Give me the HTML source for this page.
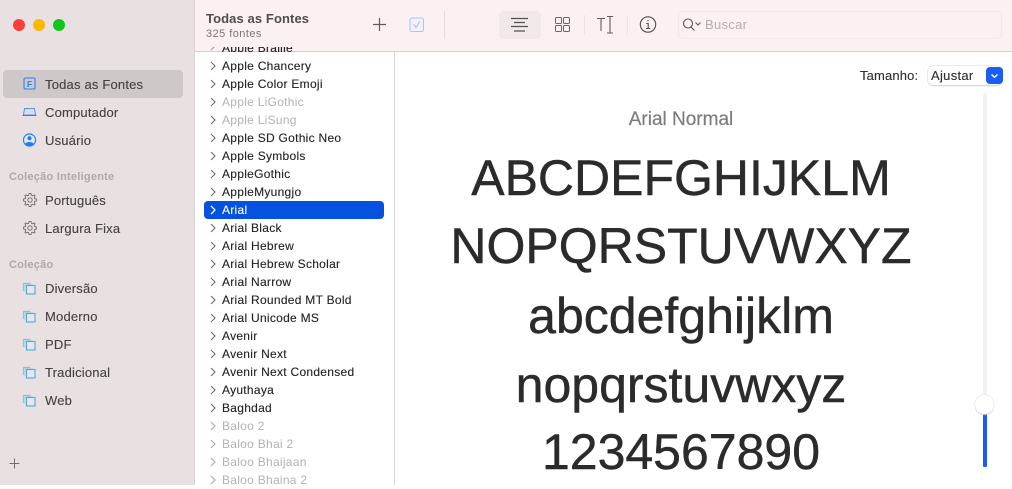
<!DOCTYPE html>
<html><head><meta charset="utf-8"><style>
html,body{margin:0;padding:0}
body{width:1012px;height:485px;overflow:hidden;position:relative;background:#fff;font-family:"Liberation Sans",sans-serif;-webkit-font-smoothing:antialiased}
div,span,svg{position:absolute}
.t{white-space:nowrap;line-height:18px}
.s{left:45px;font-size:13px;color:#454142;letter-spacing:.19px;-webkit-text-stroke:.12px #454142}
.h{left:9px;font-size:11px;font-weight:bold;color:#b0a8aa;letter-spacing:.24px}
.f{left:222px;font-size:12px;color:#222;letter-spacing:.28px;-webkit-text-stroke:.12px #222}
.f.g{color:#b2b2b2;-webkit-text-stroke:0}
.big{left:395px;width:572px;text-align:center;font-size:50px;line-height:60px;color:#2b2b2b;white-space:nowrap;-webkit-text-stroke:.45px #2b2b2b}
</style></head><body>
<div style="left:0;top:0;width:194px;height:485px;background:#e8e0e1;border-right:1px solid #d8d2d3"></div>
<div style="left:13px;top:19px;width:12px;height:12px;border-radius:50%;background:#fb3d3c"></div>
<div style="left:33px;top:19px;width:12px;height:12px;border-radius:50%;background:#fdb800"></div>
<div style="left:53px;top:19px;width:12px;height:12px;border-radius:50%;background:#0fc71c"></div>
<div style="left:3px;top:70px;width:180px;height:28px;border-radius:4px;background:#cfc8c9"></div>

<svg style="left:22px;top:76px" width="16" height="16" viewBox="0 0 16 16"><rect x="2" y="2" width="11" height="11" rx="1.2" fill="none" stroke="#2f7fee" stroke-width="1.1"/><text x="5" y="11" font-size="8.5" font-weight="bold" fill="#2f7fee" font-family="Liberation Sans">F</text></svg>
<svg style="left:22px;top:105px" width="16" height="16" viewBox="0 0 16 16"><path d="M2.5 3.500h10l1 6.500h-12z" fill="#dbdfe8" stroke="#2f7fee" stroke-width=".8"/><path d="M0.500 10.500h14" stroke="#2f7fee" stroke-width="1"/></svg>
<svg style="left:22px;top:132px" width="16" height="16" viewBox="0 0 16 16"><circle cx="7.500" cy="8" r="6" fill="#e8e8f4" stroke="#1f7cf2" stroke-width="1.200"/><circle cx="7.500" cy="6.200" r="2.100" fill="#1f7cf2"/><path d="M3.200 12c1-2.600 7.600-2.600 8.600 0a6 6 0 0 1-8.600 0z" fill="#1f7cf2"/></svg>

<div class="t s" style="top:76px">Todas as Fontes</div>
<div class="t s" style="top:104px">Computador</div>
<div class="t s" style="top:132px">Usuário</div>
<div class="t h" style="top:168px">Coleção Inteligente</div>

<svg style="left:22px;top:192px" width="16" height="16" viewBox="0 0 16 16"><g fill="none" stroke="#6b6668" stroke-width=".85"><circle cx="8" cy="8" r="2.200"/><path d="M7 1.600H9L9.400 3.300 10.700 3.800 12.200 2.900 13.100 3.800 12.200 5.300 12.700 6.600 14.400 7V9L12.700 9.400 12.200 10.700 13.100 12.200 12.200 13.100 10.700 12.200 9.400 12.700 9 14.400H7L6.600 12.700 5.300 12.200 3.800 13.100 2.900 12.200 3.800 10.700 3.300 9.400 1.600 9V7L3.300 6.600 3.800 5.300 2.900 3.800 3.800 2.900 5.300 3.800 6.600 3.300Z"/></g></svg>
<svg style="left:22px;top:220px" width="16" height="16" viewBox="0 0 16 16"><g fill="none" stroke="#6b6668" stroke-width=".85"><circle cx="8" cy="8" r="2.200"/><path d="M7 1.600H9L9.400 3.300 10.700 3.800 12.200 2.900 13.100 3.800 12.200 5.300 12.700 6.600 14.400 7V9L12.700 9.400 12.200 10.700 13.100 12.200 12.200 13.100 10.700 12.200 9.400 12.700 9 14.400H7L6.600 12.700 5.300 12.200 3.800 13.100 2.900 12.200 3.800 10.700 3.300 9.400 1.600 9V7L3.300 6.600 3.800 5.300 2.900 3.800 3.800 2.900 5.300 3.800 6.600 3.300Z"/></g></svg>
<div class="t s" style="top:192px">Português</div>
<div class="t s" style="top:220px">Largura Fixa</div>
<div class="t h" style="top:256px">Coleção</div>

<svg style="left:22px;top:282px" width="16" height="14" viewBox="0 0 16 14"><path d="M1.500 9V1.500h7" fill="none" stroke="#8cc3df" stroke-width="1.200"/><path d="M3 10V2.800h7.500" fill="none" stroke="#a5cfe4" stroke-width="1"/><rect x="4.500" y="3.500" width="8.500" height="8.500" fill="#e8e6ea" stroke="#45aede" stroke-width="1.100"/></svg>
<svg style="left:22px;top:310px" width="16" height="14" viewBox="0 0 16 14"><path d="M1.500 9V1.500h7" fill="none" stroke="#8cc3df" stroke-width="1.200"/><path d="M3 10V2.800h7.500" fill="none" stroke="#a5cfe4" stroke-width="1"/><rect x="4.500" y="3.500" width="8.500" height="8.500" fill="#e8e6ea" stroke="#45aede" stroke-width="1.100"/></svg>
<svg style="left:22px;top:338px" width="16" height="14" viewBox="0 0 16 14"><path d="M1.500 9V1.500h7" fill="none" stroke="#8cc3df" stroke-width="1.200"/><path d="M3 10V2.800h7.500" fill="none" stroke="#a5cfe4" stroke-width="1"/><rect x="4.500" y="3.500" width="8.500" height="8.500" fill="#e8e6ea" stroke="#45aede" stroke-width="1.100"/></svg>
<svg style="left:22px;top:366px" width="16" height="14" viewBox="0 0 16 14"><path d="M1.500 9V1.500h7" fill="none" stroke="#8cc3df" stroke-width="1.200"/><path d="M3 10V2.800h7.500" fill="none" stroke="#a5cfe4" stroke-width="1"/><rect x="4.500" y="3.500" width="8.500" height="8.500" fill="#e8e6ea" stroke="#45aede" stroke-width="1.100"/></svg>
<svg style="left:22px;top:394px" width="16" height="14" viewBox="0 0 16 14"><path d="M1.500 9V1.500h7" fill="none" stroke="#8cc3df" stroke-width="1.200"/><path d="M3 10V2.800h7.500" fill="none" stroke="#a5cfe4" stroke-width="1"/><rect x="4.500" y="3.500" width="8.500" height="8.500" fill="#e8e6ea" stroke="#45aede" stroke-width="1.100"/></svg>
<div class="t s" style="top:280px">Diversão</div>
<div class="t s" style="top:308px">Moderno</div>
<div class="t s" style="top:336px">PDF</div>
<div class="t s" style="top:364px">Tradicional</div>
<div class="t s" style="top:392px">Web</div>
<svg style="left:9px;top:458px" width="11" height="11" viewBox="0 0 11 11"><path d="M5.500 .5v10M.5 5.500h10" stroke="#736e6f" stroke-width="1"/></svg>

<!-- list -->
<div style="left:204px;top:201px;width:180px;height:18px;border-radius:4px;background:#0551e0"></div>
<svg style="left:205px;top:48px" width="18" height="437" viewBox="0 0 18 437" fill="none" stroke="#6f6f6f" stroke-width="1.100">
<path d="M6 14l4 4-4 4M6 32l4 4-4 4"/>
<path d="M6 50l4 4-4 4M6 68l4 4-4 4M6 86l4 4-4 4M6 104l4 4-4 4M6 122l4 4-4 4M6 140l4 4-4 4"/>
<path d="M6 158l4 4-4 4" stroke="#fff" stroke-width="1.300"/>
<path d="M6 176l4 4-4 4M6 194l4 4-4 4M6 212l4 4-4 4M6 230l4 4-4 4M6 248l4 4-4 4M6 266l4 4-4 4M6 284l4 4-4 4M6 302l4 4-4 4M6 320l4 4-4 4M6 338l4 4-4 4M6 356l4 4-4 4"/>
<path d="M6 374l4 4-4 4M6 392l4 4-4 4M6 410l4 4-4 4M6 428l4 4-4 4" stroke="#a9a9a9"/>
</svg>
<div class="t f" style="top:57px">Apple Chancery</div>
<div class="t f" style="top:75px">Apple Color Emoji</div>
<div class="t f g" style="top:93px">Apple LiGothic</div>
<div class="t f g" style="top:111px">Apple LiSung</div>
<div class="t f" style="top:129px">Apple SD Gothic Neo</div>
<div class="t f" style="top:147px">Apple Symbols</div>
<div class="t f" style="top:165px">AppleGothic</div>
<div class="t f" style="top:183px">AppleMyungjo</div>
<div class="t f" style="top:201px;color:#fff;-webkit-text-stroke:.12px #fff">Arial</div>
<div class="t f" style="top:219px">Arial Black</div>
<div class="t f" style="top:237px">Arial Hebrew</div>
<div class="t f" style="top:255px">Arial Hebrew Scholar</div>
<div class="t f" style="top:273px">Arial Narrow</div>
<div class="t f" style="top:291px">Arial Rounded MT Bold</div>
<div class="t f" style="top:309px">Arial Unicode MS</div>
<div class="t f" style="top:327px">Avenir</div>
<div class="t f" style="top:345px">Avenir Next</div>
<div class="t f" style="top:363px">Avenir Next Condensed</div>
<div class="t f" style="top:381px">Ayuthaya</div>
<div class="t f" style="top:399px">Baghdad</div>
<div class="t f g" style="top:417px">Baloo 2</div>
<div class="t f g" style="top:435px">Baloo Bhai 2</div>
<div class="t f g" style="top:453px">Baloo Bhaijaan</div>
<div class="t f g" style="top:471px">Baloo Bhaina 2</div>
<div style="left:394px;top:52px;width:1px;height:433px;background:#d9d9d9"></div>

<!-- toolbar -->
<div style="left:195px;top:0;width:817px;height:51px;background:#fbf1f1;border-bottom:1px solid #d6d2d2"></div>
<div style="left:195px;top:47px;width:199px;height:5px;overflow:hidden">
<div class="t f" style="left:27px;top:-8px">Apple Braille</div>
<svg style="left:10px;top:-1px" width="18" height="6" viewBox="0 0 18 6" fill="none" stroke="#a09c9c" stroke-width="1.100"><path d="M6 -4l4 4-4 4"/></svg>
</div>
<div class="t" style="left:206px;top:10px;font-size:13px;font-weight:bold;color:#514c4d;letter-spacing:.1px">Todas as Fontes</div>
<div class="t" style="left:206px;top:25px;font-size:11px;color:#7b7677;letter-spacing:.45px">325 fontes</div>
<svg style="left:372px;top:17px" width="15" height="15" viewBox="0 0 15 15"><path d="M7.500 1v13M1 7.500h13" stroke="#5f5a5b" stroke-width="1.200"/></svg>
<svg style="left:408px;top:16px" width="18" height="18" viewBox="0 0 18 18"><rect x="2" y="2" width="13.500" height="13.500" rx="1.800" fill="#f3f1f8" stroke="#a8c6f6" stroke-width="1.100"/><path d="M5.500 8.500l2.500 3 4-6" fill="none" stroke="#9dbdf0" stroke-width="1"/></svg>
<div style="left:444px;top:11px;width:1px;height:28px;background:#e6dede"></div>
<div style="left:499px;top:11px;width:42px;height:28px;border-radius:5px;background:#f0e8e9"></div>
<svg style="left:510px;top:17px" width="20" height="16" viewBox="0 0 20 16"><path d="M1 1.500h17M4 5.500h11M1 9.500h17M4 14h11" stroke="#565152" stroke-width="1.200"/></svg>
<svg style="left:554px;top:16px" width="18" height="18" viewBox="0 0 18 18" fill="none" stroke="#6d6768" stroke-width="1"><rect x="1.500" y="1.500" width="6" height="6" rx="1"/><rect x="9.500" y="1.500" width="6" height="6" rx="1"/><rect x="1.500" y="9.500" width="6" height="6" rx="1"/><rect x="9.500" y="9.500" width="6" height="6" rx="1"/></svg>
<div style="left:584px;top:15px;width:1px;height:20px;background:#ece4e4"></div>
<svg style="left:596px;top:15px" width="20" height="20" viewBox="0 0 20 20" fill="none" stroke="#615c5d" stroke-width="1.100"><path d="M1 3.500h8M5 3.500V16"/><path d="M11 1.500h6M11 18h6M14 1.500V18"/></svg>
<div style="left:627px;top:15px;width:1px;height:20px;background:#ece4e4"></div>
<svg style="left:639px;top:16px" width="18" height="18" viewBox="0 0 18 18" fill="none" stroke="#514c4d" stroke-width="1.100"><circle cx="9" cy="8.500" r="7.700"/><path d="M7.300 7.500H9.200V12.500M7 12.500h4.300"/><circle cx="9" cy="4.800" r=".7" fill="#514c4d" stroke="none"/></svg>
<div style="left:678px;top:11px;width:322px;height:26px;border:1px solid #f1e8e8;border-radius:5px;background:#fbf1f1"></div>
<svg style="left:682px;top:17px" width="20" height="16" viewBox="0 0 20 16" fill="none" stroke="#5c5758" stroke-width="1.100"><circle cx="6" cy="6.500" r="4.500"/><path d="M9 10l3.500 3.500"/><path d="M13.500 5.500l2.500 2.500 2.500-2.500"/></svg>
<div class="t" style="left:705px;top:16px;font-size:13px;color:#b5adae;letter-spacing:.3px">Buscar</div>

<!-- preview -->
<div class="t" style="left:860px;top:67px;font-size:13px;color:#2e2e2e;letter-spacing:.15px;-webkit-text-stroke:.12px #2e2e2e">Tamanho:</div>
<div style="left:928px;top:66px;width:74px;height:19px;border-radius:5px;background:#fff;box-shadow:0 0 0 .5px #d6d6d6,0 1px 1px #c6c6c6"></div>
<div class="t" style="left:931px;top:67px;font-size:13px;color:#2e2e2e;letter-spacing:.3px;-webkit-text-stroke:.12px #2e2e2e">Ajustar</div>
<div style="left:986px;top:67px;width:17px;height:17px;border-radius:4px;background:#1a5cf4"></div>
<svg style="left:986px;top:67px" width="17" height="17" viewBox="0 0 17 17"><path d="M5.500 7.500l3 2.800 3-2.800" fill="none" stroke="#fff" stroke-width="1.400"/></svg>

<div class="t" style="left:395px;width:572px;text-align:center;top:108px;line-height:24px;font-size:19px;color:#7c7c7c;-webkit-text-stroke:.2px #7c7c7c">Arial Normal</div>
<div class="big" style="top:148px">ABCDEFGHIJKLM</div>
<div class="big" style="top:216px">NOPQRSTUVWXYZ</div>
<div class="big" style="top:286px">abcdefghijklm</div>
<div class="big" style="top:355px">nopqrstuvwxyz</div>
<div class="big" style="top:422px">1234567890</div>

<div style="left:983px;top:93px;width:4px;height:310px;background:#f1f1f1;border-radius:2px 2px 0 0"></div>
<div style="left:983px;top:413px;width:4px;height:54px;background:#1a5cf4;border-radius:0 0 1px 1px"></div>
<div style="left:975px;top:395px;width:19px;height:19px;border-radius:50%;background:#fff;box-shadow:0 0 0 .5px #dcdcdc,0 1px 1px #bdbdbd"></div>
</body></html>
